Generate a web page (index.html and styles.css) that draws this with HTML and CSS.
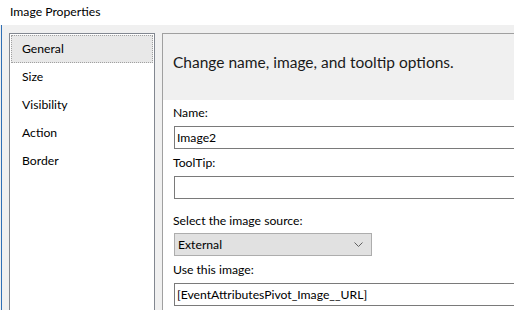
FILE: index.html
```html
<!DOCTYPE html>
<html>
<head>
<meta charset="utf-8">
<link rel="stylesheet" href="styles.css">
</head>
<body>
<div class="titlebar">Image Properties</div>
<div class="window">
  <ul class="nav">
    <li class="item selected">General</li>
    <li class="item">Size</li>
    <li class="item">Visibility</li>
    <li class="item">Action</li>
    <li class="item">Border</li>
  </ul>
  <section class="panel">
    <div class="panel-head">Change name, image, and tooltip options.</div>
    <div class="panel-body">
      <div class="label first">Name:</div>
      <div class="textbox">Image2</div>
      <div class="label">ToolTip:</div>
      <div class="textbox"></div>
      <div class="label group">Select the image source:</div>
      <div class="combo">
        <span>External</span>
        <svg class="chev" width="9" height="5" viewBox="0 0 9 5"><path d="M0.5 0.5 L4.5 4.5 L8.5 0.5" fill="none" stroke="#606060" stroke-width="1"/></svg>
      </div>
      <div class="label">Use this image:</div>
      <div class="textbox">[EventAttributesPivot_Image__URL]</div>
    </div>
  </section>
</div>
</body>
</html>
```
FILE: styles.css
```css
html, body {
  margin: 0;
  padding: 0;
  width: 514px;
  height: 310px;
  overflow: hidden;
}
body {
  background: #f0f0f0;
  font-family: Lato, "Noto Sans", sans-serif;
  font-size: 12.2px;
  color: #000;
}
.titlebar {
  height: 25px;
  background: #fff;
  padding-left: 10px;
  line-height: 24px;
  box-sizing: border-box;
}
.window {
  display: flex;
  height: 285px;
  margin-left: 1px;
  border-left: 1px solid #2f6fb5;
  padding: 8px 0 0 7px;
  box-sizing: border-box;
}
.nav {
  list-style: none;
  margin: 0;
  padding: 1px 1px 0;
  width: 146px;
  box-sizing: border-box;
  background: #fff;
  border: 1px solid #828790;
  border-bottom: 0;
  flex: none;
}
.item {
  height: 28px;
  line-height: 28px;
  padding-left: 11px;
  box-sizing: border-box;
}
.item.selected {
  background: #e8e8e8;
  border: 1px dotted #a0a0a0;
  line-height: 26px;
  padding-left: 10px;
}
.panel {
  margin-left: 7px;
  flex: 1;
  min-width: 0;
  overflow: hidden;
  border: 1px solid #a0a0a0;
  border-right: 0;
  border-bottom: 0;
  background: #fff;
  box-sizing: border-box;
}
.panel-head {
  height: 66px;
  background: #f0f0f0;
  font-size: 15.5px;
  line-height: 56px;
  padding-left: 10px;
  color: #1a1a1a;
  white-space: nowrap;
}
.panel-body {
  padding-left: 11px;
}
.label {
  height: 16px;
  line-height: 16px;
  margin-top: 6px;
  margin-left: -1px;
}
.label.first {
  margin-top: 5px;
}
.label.group {
  margin-top: 14px;
}
.textbox {
  margin-top: 5px;
  height: 23px;
  width: calc(100% + 10px);
  box-sizing: border-box;
  border: 1px solid #7a7a7a;
  background: #fff;
  line-height: 21px;
  padding-left: 2px;
  white-space: nowrap;
}
.combo {
  margin-top: 4px;
  height: 23px;
  width: 198px;
  box-sizing: border-box;
  border: 1px solid #adadad;
  background: #e1e1e1;
  display: flex;
  align-items: center;
  justify-content: space-between;
  padding: 0 8px 0 3px;
}
.chev {
  display: block;
}
```
